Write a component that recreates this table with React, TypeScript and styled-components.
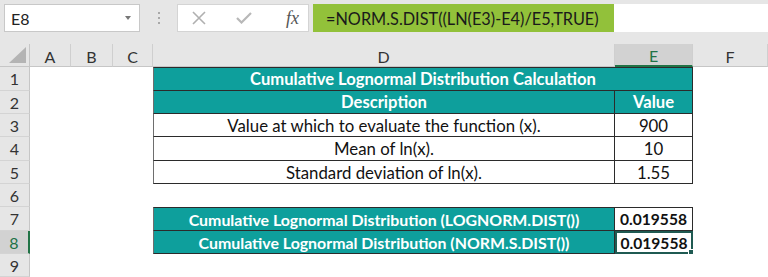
import styled, { createGlobalStyle } from "styled-components";

const Global = createGlobalStyle`
  html, body {
    margin: 0;
    padding: 0;
    background: #e6e6e6;
  }
  body {
    font-family: Lato, "Open Sans", sans-serif;
  }
`;

const Page = styled.div`
  width: 768px;
  height: 277px;
  overflow: hidden;
  background: #e6e6e6;
`;

const FormulaBar = styled.div`
  display: flex;
  align-items: stretch;
  height: 28px;
  padding: 4px 0 0 4px;
  margin-bottom: 12px;
`;

const NameBox = styled.div`
  width: 136px;
  box-sizing: border-box;
  background: #fff;
  border: 1px solid #c8c8c8;
  display: flex;
  align-items: center;
  justify-content: space-between;
  padding: 0 8px 0 6px;
  font-size: 16px;
  color: #222;
`;

const DropArrow = styled.span`
  width: 0;
  height: 0;
  border-left: 3px solid transparent;
  border-right: 3px solid transparent;
  border-top: 4px solid #777;
`;

const Grip = styled.div`
  width: 37px;
  display: flex;
  flex-direction: column;
  align-items: center;
  justify-content: center;
  gap: 3px;

  & span {
    width: 2px;
    height: 2px;
    background: #a8a8a8;
  }
`;

const ButtonBox = styled.div`
  width: 132px;
  box-sizing: border-box;
  background: #fff;
  border: 1px solid #d4d4d4;
  display: flex;
  align-items: center;
  padding-left: 14px;
  gap: 30px;
`;

const Fx = styled.span`
  font-family: "Liberation Serif", serif;
  font-style: italic;
  font-size: 18px;
  color: #555;
  margin-left: 4px;
`;

const Formula = styled.div`
  margin-left: 4px;
  width: 301px;
  background: #92c13a;
  display: flex;
  align-items: center;
  padding-left: 13px;
  box-sizing: border-box;
  font-size: 16.3px;
  color: #1a1a1a;
  white-space: nowrap;
`;

const FormulaRest = styled.div`
  flex: 1;
  background: #fff;
`;

const Sheet = styled.div`
  display: grid;
  grid-template-columns: 30px 41px 42px 40px 462px 78px 75px;
  grid-template-rows: 23px 24px 23px 23px 24px 23px 23px 24px 23px 23px;
  background: #fff;
`;

const Corner = styled.div`
  background: #e6e6e6;
  border-right: 1px solid #c6c6c6;
  border-bottom: 1px solid #c6c6c6;
  position: relative;

  &::after {
    content: "";
    position: absolute;
    right: 3px;
    bottom: 3px;
    border-left: 17px solid transparent;
    border-bottom: 16px solid #b4b4b4;
  }
`;

const ColHead = styled.div<{ $active?: boolean }>`
  background: ${(p) => (p.$active ? "#d2d2d2" : "#e6e6e6")};
  border-right: 1px solid #cfcfcf;
  border-bottom: ${(p) => (p.$active ? "2px solid #217346" : "1px solid #c6c6c6")};
  box-sizing: border-box;
  display: flex;
  align-items: center;
  justify-content: center;
  font-size: 16px;
  color: ${(p) => (p.$active ? "#217346" : "#333")};
  padding-top: 2px;
`;

const RowHead = styled.div<{ $active?: boolean }>`
  background: ${(p) => (p.$active ? "#d2d2d2" : "#e6e6e6")};
  border-right: ${(p) => (p.$active ? "2px solid #217346" : "1px solid #c6c6c6")};
  border-bottom: 1px solid #d4d4d4;
  box-sizing: border-box;
  display: flex;
  align-items: center;
  justify-content: center;
  font-size: 16px;
  color: ${(p) => (p.$active ? "#217346" : "#333")};
`;

type CellProps = {
  $fill?: boolean;
  $bold?: boolean;
  $span?: number;
  $top?: boolean;
  $left?: boolean;
  $box?: boolean;
  $size?: number;
};

const Cell = styled.div<CellProps>`
  grid-column: span ${(p) => p.$span ?? 1};
  box-sizing: border-box;
  display: flex;
  align-items: center;
  justify-content: center;
  white-space: nowrap;
  font-size: ${(p) => p.$size ?? 16.8}px;
  font-weight: ${(p) => (p.$bold ? 700 : 400)};
  color: ${(p) => (p.$fill ? "#fff" : "#111")};
  background: ${(p) => (p.$fill ? "#0e9f9c" : "#fff")};
  ${(p) =>
    p.$box &&
    `
    border-right: 1px solid #2b2b2b;
    border-bottom: 1px solid #2b2b2b;
  `}
  ${(p) => p.$top && "border-top: 1px solid #2b2b2b;"}
  ${(p) => p.$left && "border-left: 1px solid #6e6e6e;"}
`;

const Selected = styled(Cell)`
  border: 2px solid #1f5a52;
  position: relative;

  &::after {
    content: "";
    position: absolute;
    right: -3px;
    bottom: -3px;
    width: 4px;
    height: 4px;
    background: #1f5a52;
    border: 1px solid #fff;
  }
`;

const Empty = styled.div``;

type Row = {
  d?: string;
  e?: string;
  kind: "title" | "head" | "data" | "result" | "blank";
};

const rows: Row[] = [
  { kind: "title", d: "Cumulative Lognormal Distribution Calculation" },
  { kind: "head", d: "Description", e: "Value" },
  { kind: "data", d: "Value at which to evaluate the function (x).", e: "900" },
  { kind: "data", d: "Mean of ln(x).", e: "10" },
  { kind: "data", d: "Standard deviation of ln(x).", e: "1.55" },
  { kind: "blank" },
  { kind: "result", d: "Cumulative Lognormal Distribution (LOGNORM.DIST())", e: "0.019558" },
  { kind: "result", d: "Cumulative Lognormal Distribution (NORM.S.DIST())", e: "0.019558" },
  { kind: "blank" },
];

function CrossIcon() {
  return (
    <svg width="14" height="14" viewBox="0 0 14 14">
      <path d="M1 1 L13 13 M13 1 L1 13" stroke="#b0b0b0" strokeWidth="1.6" fill="none" />
    </svg>
  );
}

function CheckIcon() {
  return (
    <svg width="16" height="12" viewBox="0 0 16 12">
      <path d="M1 6 L5.5 10.5 L15 1" stroke="#b8b8b8" strokeWidth="2.2" fill="none" />
    </svg>
  );
}

function SheetRow({ row, index }: { row: Row; index: number }) {
  const num = index + 1;
  const active = num === 8;
  const first = num === 1 || num === 7;
  let d = <Empty />;
  let e = <Empty />;
  if (row.kind === "title") {
    d = (
      <Cell $fill $bold $span={2} $top $left $box $size={16.6}>
        {row.d}
      </Cell>
    );
    e = <></>;
  } else if (row.kind === "head") {
    d = (
      <Cell $fill $bold $left $box $size={16.6}>
        {row.d}
      </Cell>
    );
    e = (
      <Cell $fill $bold $box $size={16.6}>
        {row.e}
      </Cell>
    );
  } else if (row.kind === "data") {
    d = (
      <Cell $left $box>
        {row.d}
      </Cell>
    );
    e = <Cell $box>{row.e}</Cell>;
  } else if (row.kind === "result") {
    d = (
      <Cell $fill $bold $left $box $top={first} $size={15.9}>
        {row.d}
      </Cell>
    );
    e = active ? (
      <Selected $bold $size={15.6}>{row.e}</Selected>
    ) : (
      <Cell $bold $box $top={first} $size={15.6}>
        {row.e}
      </Cell>
    );
  }
  return (
    <>
      <RowHead $active={active}>{num}</RowHead>
      <Empty />
      <Empty />
      <Empty />
      {d}
      {e}
      <Empty />
    </>
  );
}

export default function App() {
  return (
    <Page>
      <Global />
      <FormulaBar>
        <NameBox>
          E8
          <DropArrow />
        </NameBox>
        <Grip>
          <span />
          <span />
          <span />
        </Grip>
        <ButtonBox>
          <CrossIcon />
          <CheckIcon />
          <Fx>fx</Fx>
        </ButtonBox>
        <Formula>=NORM.S.DIST((LN(E3)-E4)/E5,TRUE)</Formula>
        <FormulaRest />
      </FormulaBar>
      <Sheet>
        <Corner />
        <ColHead>A</ColHead>
        <ColHead>B</ColHead>
        <ColHead>C</ColHead>
        <ColHead>D</ColHead>
        <ColHead $active>E</ColHead>
        <ColHead>F</ColHead>
        {rows.map((r, i) => (
          <SheetRow key={i} row={r} index={i} />
        ))}
      </Sheet>
    </Page>
  );
}
